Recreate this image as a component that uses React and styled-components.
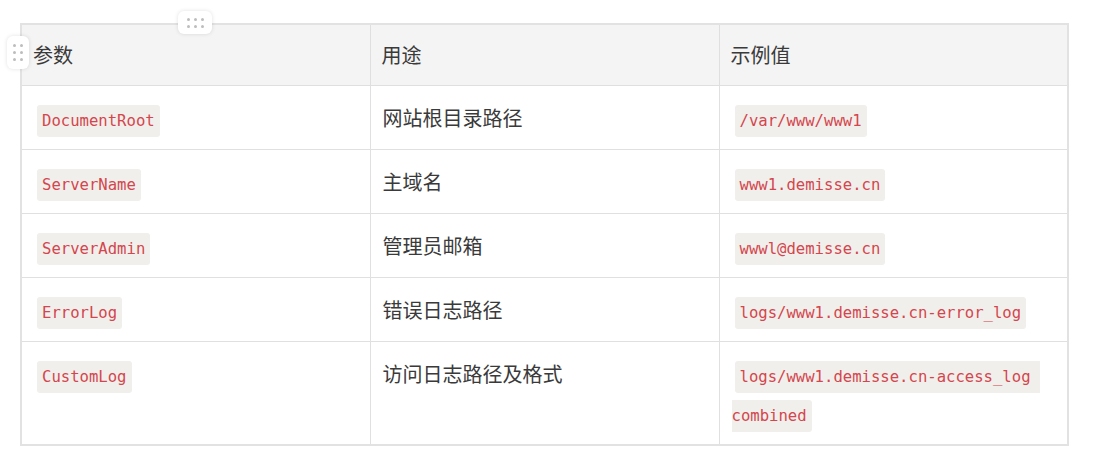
import React from "react";
import styled, { createGlobalStyle } from "styled-components";

const GlobalStyle = createGlobalStyle`
  body {
    margin: 0;
    background: #fff;
    font-family: "Noto Sans CJK SC", "Noto Sans", sans-serif;
    color: #3a3a3a;
  }
`;

const Page = styled.div`
  padding: 23px 0 0 20px;
`;

const TableWrap = styled.div`
  position: relative;
  width: 1049px;
`;

const Table = styled.table`
  width: 100%;
  table-layout: fixed;
  border-collapse: collapse;
  border: 2px solid #e2e2e2;
`;

const HeadCell = styled.th`
  background: #f4f4f4;
  border: 1px solid #dfdfdf;
  padding: 12px 12px 12px 11px;
  text-align: left;
  font-weight: normal;
  font-size: 20px;
  line-height: 36px;
  color: #3a3a3a;
`;

const Cell = styled.td`
  border: 1px solid #e0e0e0;
  padding: 12px;
  vertical-align: top;
  font-size: 20px;
  line-height: 39px;
  color: #3a3a3a;
`;

const Code = styled.code`
  font-family: "DejaVu Sans Mono", "Liberation Mono", monospace;
  font-size: 15.6px;
  line-height: 18px;
  white-space: break-spaces;
  color: #d4464d;
  background: #f1efec;
  border-radius: 3px;
  padding: 7px 5px;
  margin-left: 3px;
  box-decoration-break: slice;
  -webkit-box-decoration-break: slice;
`;

const Handle = styled.div`
  position: absolute;
  background: #fff;
  border-radius: 6px;
  box-shadow: 0 0 4px rgba(0, 0, 0, 0.12);
  display: grid;
  grid-template-columns: ${(p) => `repeat(${p.cols}, 3px)`};
  gap: 4px;
  align-content: center;
  justify-content: center;
  left: ${(p) => p.left}px;
  top: ${(p) => p.top}px;
  width: ${(p) => p.w}px;
  height: ${(p) => p.h}px;
`;

const Dot = styled.span`
  width: 3px;
  height: 3px;
  border-radius: 50%;
  background: #bdbdbd;
`;

const rows = [
  ["DocumentRoot", "网站根目录路径", "/var/www/www1"],
  ["ServerName", "主域名", "www1.demisse.cn"],
  ["ServerAdmin", "管理员邮箱", "wwwl@demisse.cn"],
  ["ErrorLog", "错误日志路径", "logs/www1.demisse.cn-error_log"],
  ["CustomLog", "访问日志路径及格式", "logs/www1.demisse.cn-access_log combined"],
];

function Dots({ n }) {
  return Array.from({ length: n }).map((_, i) => <Dot key={i} />);
}

export default function App() {
  return (
    <Page>
      <GlobalStyle />
      <TableWrap>
        <Table>
          <thead>
            <tr>
              <HeadCell>参数</HeadCell>
              <HeadCell>用途</HeadCell>
              <HeadCell>示例值</HeadCell>
            </tr>
          </thead>
          <tbody>
            {rows.map((r, i) => (
              <tr key={i}>
                <Cell><Code>{r[0]}</Code></Cell>
                <Cell>{r[1]}</Cell>
                <Cell><Code>{r[2]}</Code></Cell>
              </tr>
            ))}
          </tbody>
        </Table>
        <Handle cols={3} left={158} top={-12} w={34} h={23}>
          <Dots n={6} />
        </Handle>
        <Handle cols={2} left={-13} top={13} w={22} h={33}>
          <Dots n={6} />
        </Handle>
      </TableWrap>
    </Page>
  );
}
